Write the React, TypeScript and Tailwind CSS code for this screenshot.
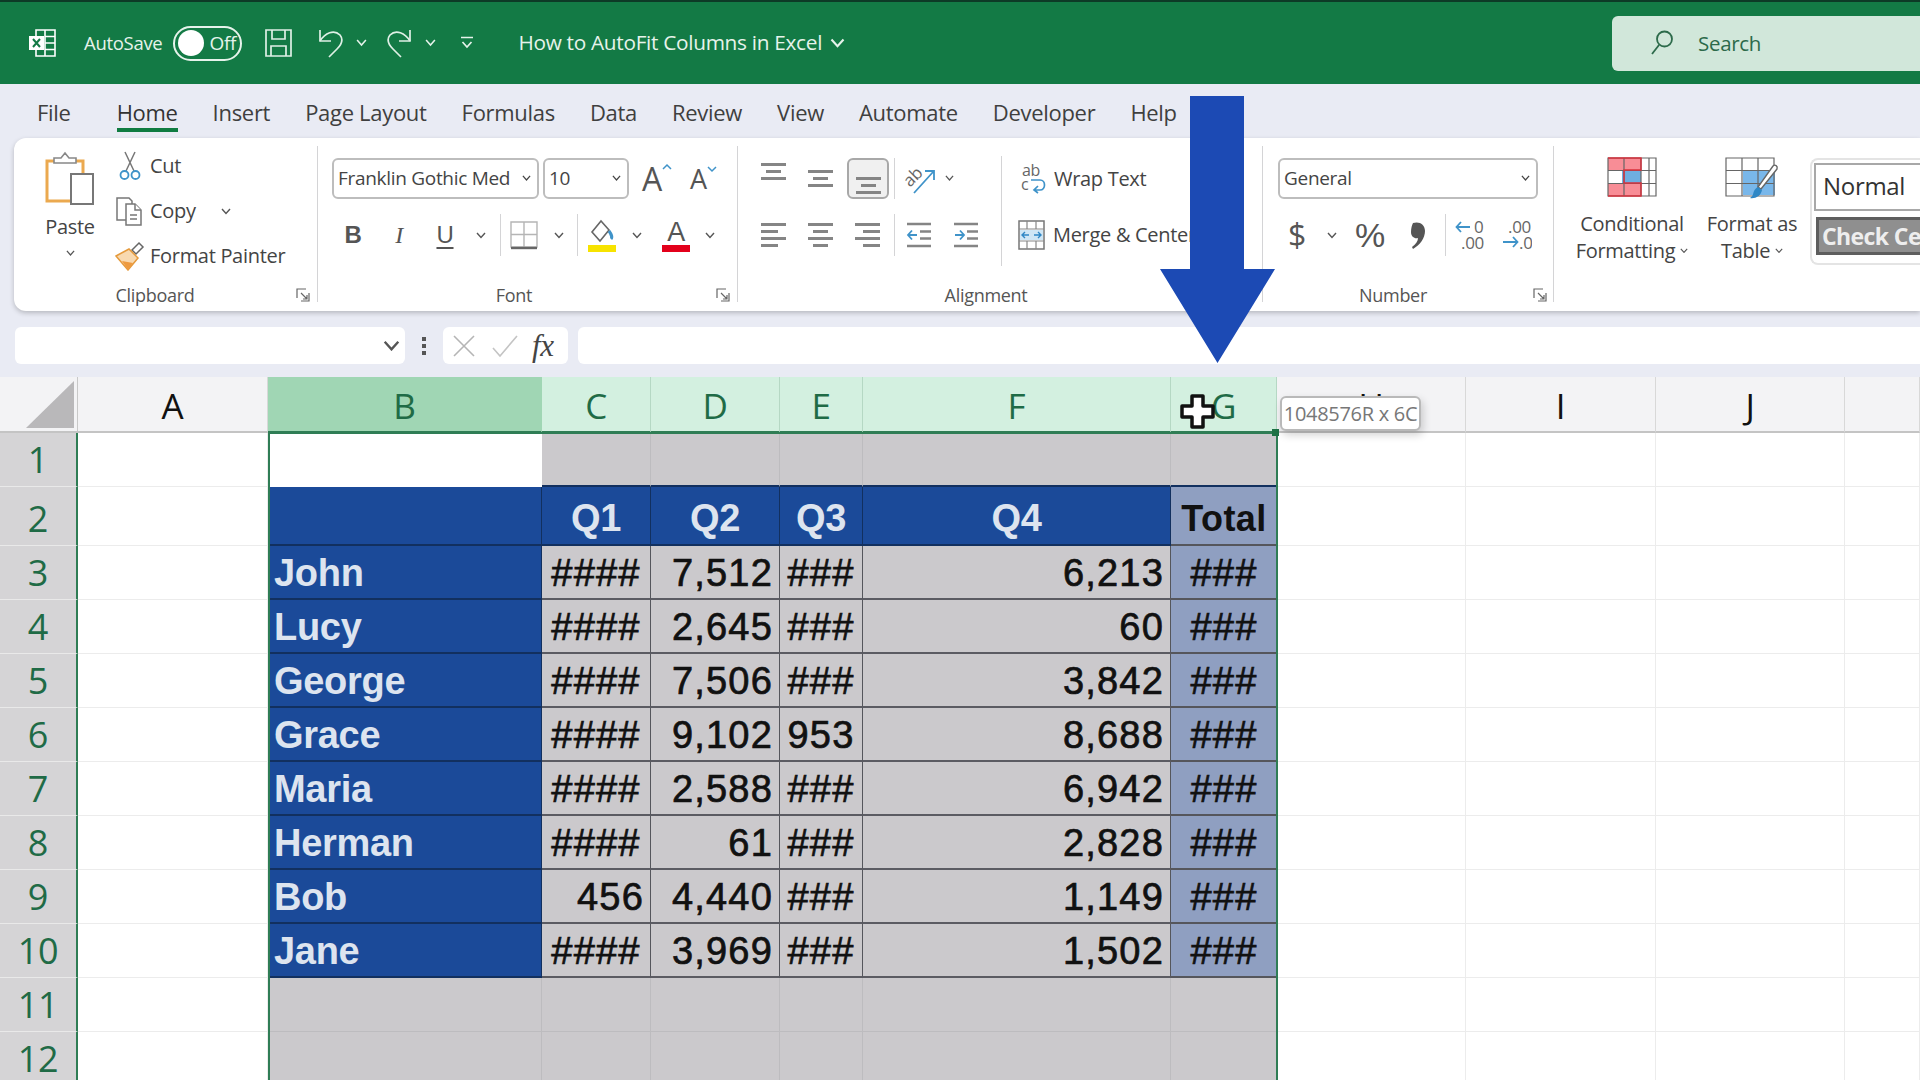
import React from "react";

const Chev = ({ w = 10, color = "#555" }: { w?: number; color?: string }) => (
  <svg width={w} height={w * 0.7} viewBox="0 0 10 7" fill="none" stroke={color} strokeWidth="1.4">
    <path d="M1 1l4 4.500L9 1" />
  </svg>
);

const Slot = ({ w, children, className = "" }: { w: number; children?: React.ReactNode; className?: string }) => (
  <div className={`flex items-center justify-center shrink-0 ${className}`} style={{ width: w }}>
    {children}
  </div>
);

const VSep = () => <div className="w-px h-[42px] bg-[#d4d4d6] shrink-0" />;
const GroupSep = () => <div className="w-px h-[156px] bg-[#d4d4d6] shrink-0" />;

const Launcher = () => (
  <svg width="14" height="14" viewBox="0 0 14 14" fill="none" stroke="#666" strokeWidth="1.2" className="shrink-0">
    <path d="M1 10V1h9M13 5v8H5M5 5l6 6M11 7v4H7" />
  </svg>
);

const Lines = ({ widths, align = "items-center" }: { widths: number[]; align?: string }) => (
  <div className={`flex flex-col gap-[4px] w-[25px] ${align}`}>
    {widths.map((w, i) => (
      <div key={i} className="h-[3px] bg-[#858585]" style={{ width: w }} />
    ))}
  </div>
);

const Combo = ({ w, label }: { w: number; label: string }) => (
  <div
    className="h-[41px] flex items-center justify-between pl-[4px] pr-[6px] bg-white border-2 border-[#bdbdbd] rounded-[6px] text-[19px] text-[#444] shrink-0"
    style={{ width: w }}
  >
    <span>{label}</span>
    <Chev w={9} color="#444" />
  </div>
);

const ExcelIcon = () => (
  <svg width="29" height="30" viewBox="0 0 29 30" fill="none" stroke="#fff" strokeWidth="1.6">
    <path d="M8 2h19v26H8z" />
    <path d="M17 2v26M17 8.500h10M17 15h10M17 21.500h10" />
    <rect x="1" y="8" width="15" height="14" fill="#fff" stroke="none" />
    <path d="M5 11l7 8M12 11l-7 8" stroke="#137a45" strokeWidth="2" />
  </svg>
);

const SaveIcon = () => (
  <svg width="29" height="30" viewBox="0 0 29 30" fill="none" stroke="#dff0e6" strokeWidth="1.7">
    <path d="M2 2h25v26H2z" />
    <path d="M8 2v9h13V2M7 28V18h15v10" />
  </svg>
);

const UndoIcon = ({ flip = false }: { flip?: boolean }) => (
  <svg width="27" height="31" viewBox="0 0 27 31" fill="none" stroke="#dff0e6" strokeWidth="1.7" className={flip ? "-scale-x-100" : ""}>
    <path d="M3 2v11h11" />
    <path d="M3 13C8 5 17 1 23 7c4 5 1 10-3 14l-8 8" />
  </svg>
);

const ScissorsIcon = () => (
  <svg width="24" height="30" viewBox="0 0 24 30" fill="none">
    <path d="M7 1l9 19M17 1L8 20" stroke="#777" strokeWidth="1.5" />
    <circle cx="6.500" cy="24" r="4" stroke="#3f93c9" strokeWidth="1.8" />
    <circle cx="17.500" cy="24" r="4" stroke="#3f93c9" strokeWidth="1.8" />
  </svg>
);

const CopyIcon = () => (
  <svg width="30" height="30" viewBox="0 0 30 30" fill="#fff" stroke="#777" strokeWidth="1.5">
    <path d="M2 2h12l3 3v19H2z" />
    <path d="M11 8h9l6 6v15H11z" />
    <path d="M20 8v6h6M15 19h7M15 23h7" />
  </svg>
);

const PainterIcon = () => (
  <svg width="30" height="30" viewBox="0 0 30 30">
    <path d="M17 9l7-7 4 4-7 7z" fill="#fff" stroke="#666" strokeWidth="1.5" />
    <path d="M1 15L14 8l9 9-10 12z" fill="#f8d9b0" stroke="#e59a3c" strokeWidth="1.5" />
    <path d="M7 20l11 2-5 7z" fill="#ee9a3f" />
  </svg>
);

const PasteIcon = () => (
  <svg width="50" height="54" viewBox="0 0 50 54">
    <path d="M2 10h36v40H2z" fill="#fff" stroke="#eba94f" strokeWidth="3" />
    <path d="M9 12V7h7l4-5 4 5h7v5z" fill="#fff" stroke="#888" strokeWidth="1.6" />
    <path d="M26 23h22v30H26z" fill="#fff" stroke="#777" strokeWidth="2" />
  </svg>
);

const BorderIcon = () => (
  <svg width="28" height="29" viewBox="0 0 28 29" fill="none" stroke="#b5b5b5" strokeWidth="1.4">
    <path d="M1 1h26v25H1zM14 1v25M1 13.500h26" />
    <path d="M1 27h26" stroke="#666" strokeWidth="2.400" />
  </svg>
);

const FillIcon = () => (
  <div className="flex flex-col items-center">
    <svg width="26" height="26" viewBox="0 0 26 26" fill="none" stroke="#666" strokeWidth="1.6">
      <path d="M12 2l-9 11 8 9 9-11z" />
      <path d="M20 12c3 4 3 7 2 8" stroke="#3f93c9" strokeWidth="3" />
    </svg>
    <div className="w-[28px] h-[7px] bg-[#f7e300]" />
  </div>
);

const OrientIcon = () => (
  <svg width="32" height="30" viewBox="0 0 32 30" fill="none">
    <text x="2" y="22" fontSize="17" fill="#666" transform="rotate(-45 6 18)" fontFamily="Open Sans, sans-serif">ab</text>
    <path d="M10 29L29 8M21 7h9v9" stroke="#3f93c9" strokeWidth="1.8" />
  </svg>
);

const IndentIcon = ({ right = false }: { right?: boolean }) => (
  <svg width="26" height="26" viewBox="0 0 26 26" fill="none">
    <path d="M1 2h24M14 9.500h11M14 16.500h11M1 24h24" stroke="#858585" strokeWidth="2.600" />
    {right ? (
      <path d="M2 13h9M7 8.500l4 4.500-4 4.500" stroke="#3f93c9" strokeWidth="1.800" />
    ) : (
      <path d="M11 13H2M6 8.500L2 13l4 4.500" stroke="#3f93c9" strokeWidth="1.800" />
    )}
  </svg>
);

const WrapIcon = () => (
  <svg width="26" height="31" viewBox="0 0 26 31" fill="none">
    <text x="1" y="13" fontSize="16" fill="#666" fontFamily="Open Sans, sans-serif">ab</text>
    <text x="0" y="27" fontSize="16" fill="#666" fontFamily="Open Sans, sans-serif">c</text>
    <path d="M10 17h9c6 0 6 10 0 10h-6M17 23l-4 4 4 3" stroke="#3f93c9" strokeWidth="1.7" />
  </svg>
);

const MergeIcon = () => (
  <svg width="27" height="30" viewBox="0 0 27 30" fill="none">
    <path d="M1 1h25v28H1z" stroke="#777" strokeWidth="1.5" />
    <path d="M1 9h25M1 21h25M9 1v8M18 1v8M9 21v8M18 21v8" stroke="#888" strokeWidth="1.2" />
    <rect x="2" y="10" width="23" height="10" fill="#cfe6f5" />
    <path d="M4 15h7M7 12l-3 3 3 3M23 15h-7M20 12l3 3-3 3" stroke="#2f87c5" strokeWidth="1.4" />
  </svg>
);

const DecimalIcon = ({ more }: { more: boolean }) => (
  <svg width="30" height="32" viewBox="0 0 30 32" fill="none">
    <text x={more ? 19 : 6} y="14" fontSize="17" fill="#666" fontFamily="Open Sans, sans-serif">{more ? "0" : ".00"}</text>
    <text x={more ? 6 : 17} y="30" fontSize="17" fill="#666" fontFamily="Open Sans, sans-serif">{more ? ".00" : ".0"}</text>
    {more ? (
      <path d="M15 8H2M6 3L1.500 8 6 13" stroke="#3f93c9" strokeWidth="1.800" />
    ) : (
      <path d="M1 23h14M11 18l4.500 5-4.500 5" stroke="#3f93c9" strokeWidth="1.800" />
    )}
  </svg>
);

const CondIcon = () => (
  <svg width="50" height="40" viewBox="0 0 50 40" fill="none">
    <rect x="1" y="1" width="33" height="12" fill="#f88d96" />
    <rect x="15" y="14" width="19" height="12" fill="#6eaee0" />
    <rect x="1" y="27" width="33" height="12" fill="#f88d96" />
    <path d="M1 1h48v38H1zM17 1v38M34 1v38M42 1v38M1 13.500h48M1 26.500h48" stroke="#666" strokeWidth="1.2" />
    <path d="M1 1h33v12H17v13h17v13H1" stroke="#d9303c" strokeWidth="1.4" />
  </svg>
);

const TableIcon = () => (
  <svg width="54" height="48" viewBox="0 0 54 48" fill="none">
    <rect x="18" y="14" width="32" height="24" fill="#79b7ea" />
    <path d="M1 1h48v38H1zM17 1v38M33 1v38M1 13.500h48M1 26.500h48" stroke="#666" strokeWidth="1.2" />
    <path d="M52 12L36 32l-3-2L48 9c2-2 5 0 4 3z" fill="#fff" stroke="#666" strokeWidth="1.4" />
    <path d="M33 30l4 3c-1 6-7 9-12 8 3-2 3-4 4-7 1-2 2-3 4-4z" fill="#2f87c5" />
  </svg>
);

const Ribbon = () => (
  <div className="ml-[14px] h-[173px] bg-white rounded-l-[12px] shadow-[0_2px_5px_rgba(0,0,0,0.22)] pt-[8px] flex items-start text-[#444] text-[20px]">
    {/* Clipboard */}
    <div className="w-[303px] shrink-0">
      <div className="h-[137px] flex pl-[26px]">
        <div className="w-[60px] flex flex-col items-center pt-[5px]">
          <PasteIcon />
          <div className="mt-[8px] leading-[28px]">Paste</div>
          <div className="mt-[9px]"><Chev w={9} /></div>
        </div>
        <div className="ml-[15px] pt-[2px] flex flex-col gap-[9px]">
          <div className="h-[36px] flex items-center"><Slot w={30}><ScissorsIcon /></Slot><span className="ml-[5px]">Cut</span></div>
          <div className="h-[36px] flex items-center"><Slot w={30}><CopyIcon /></Slot><span className="ml-[5px]">Copy</span><span className="ml-[25px]"><Chev w={10} /></span></div>
          <div className="h-[36px] flex items-center"><Slot w={30}><PainterIcon /></Slot><span className="ml-[5px]">Format Painter</span></div>
        </div>
      </div>
      <div className="h-[24px] flex items-center text-[18px] text-[#555]">
        <span className="w-[282px] text-center">Clipboard</span>
        <Launcher />
      </div>
    </div>
    <GroupSep />

    {/* Font */}
    <div className="w-[419px] shrink-0">
      <div className="h-[137px] pt-[12px]">
        <div className="h-[41px] flex items-center pl-[14px]">
          <Combo w={207} label="Franklin Gothic Med" />
          <div className="ml-[4px]"><Combo w={86} label="10" /></div>
          <div className="ml-[13px] flex items-start w-[34px] text-[32px] leading-none text-[#555]">
            <span>A</span><svg width="10" height="8" viewBox="0 0 10 8" fill="none" stroke="#3f93c9" strokeWidth="1.500"><path d="M1 6l4-4 4 4" /></svg>
          </div>
          <div className="ml-[14px] flex items-start w-[34px] text-[27px] leading-none text-[#555]">
            <span>A</span><svg width="10" height="8" viewBox="0 0 10 8" fill="none" stroke="#3f93c9" strokeWidth="1.500"><path d="M1 2l4 4 4-4" /></svg>
          </div>
        </div>
        <div className="mt-[15px] h-[42px] flex items-center pl-[12px] text-[24px] text-[#555]">
          <Slot w={46}><span className="font-bold font-['Liberation_Sans',sans-serif]">B</span></Slot>
          <Slot w={46}><span className="italic font-['Liberation_Serif',serif]">I</span></Slot>
          <Slot w={46}><span className="underline underline-offset-4 decoration-2 font-['Liberation_Sans',sans-serif]">U</span></Slot>
          <Slot w={26}><Chev w={10} /></Slot>
          <div className="ml-[6px]"><VSep /></div>
          <Slot w={45}><BorderIcon /></Slot>
          <Slot w={26}><Chev w={10} /></Slot>
          <div className="ml-[5px]"><VSep /></div>
          <Slot w={48}><FillIcon /></Slot>
          <Slot w={22}><Chev w={10} /></Slot>
          <Slot w={56}>
            <div className="flex flex-col items-center">
              <span className="text-[27px] leading-[26px] font-['Liberation_Sans',sans-serif]">A</span>
              <div className="w-[28px] h-[7px] bg-[#e3001b]" />
            </div>
          </Slot>
          <Slot w={12}><Chev w={10} /></Slot>
        </div>
      </div>
      <div className="h-[24px] flex items-center text-[18px] text-[#555]">
        <span className="w-[392px] text-center">Font</span>
        <span className="ml-[6px]"><Launcher /></span>
      </div>
    </div>
    <GroupSep />

    {/* Alignment */}
    <div className="w-[524px] shrink-0">
      <div className="h-[137px] flex">
        <div className="w-[263px] shrink-0 pt-[12px]">
          <div className="h-[41px] flex items-center pl-[12px]">
            <Slot w={46} className="pb-[15px]"><Lines widths={[25, 15, 25]} /></Slot>
            <Slot w={48}><Lines widths={[25, 15, 25]} /></Slot>
            <div className="ml-[3px] w-[42px] h-[41px] rounded-[6px] border-2 border-[#a8a8a8] bg-[#f0f0f0] flex items-end justify-center pb-[3px] shrink-0">
              <Lines widths={[25, 15, 25]} />
            </div>
            <div className="ml-[5px]"><div className="w-px h-[41px] bg-[#d4d4d6]" /></div>
            <Slot w={50}><OrientIcon /></Slot>
            <Chev w={9} />
          </div>
          <div className="mt-[15px] h-[42px] flex items-center pl-[12px]">
            <Slot w={46}><Lines widths={[25, 17, 25, 17]} align="items-start" /></Slot>
            <Slot w={48}><Lines widths={[25, 15, 25, 15]} /></Slot>
            <Slot w={46}><Lines widths={[25, 17, 25, 17]} align="items-end" /></Slot>
            <div className="ml-[4px]"><VSep /></div>
            <Slot w={48}><IndentIcon /></Slot>
            <Slot w={46}><IndentIcon right /></Slot>
          </div>
        </div>
        <div className="w-px h-[110px] mt-[10px] bg-[#d4d4d6] shrink-0" />
        <div className="flex-1 pt-[12px] whitespace-nowrap">
          <div className="h-[41px] flex items-center pl-[19px]">
            <WrapIcon /><span className="ml-[7px]">Wrap Text</span>
          </div>
          <div className="mt-[15px] h-[42px] flex items-center pl-[16px]">
            <MergeIcon /><span className="ml-[8px]">Merge &amp; Center</span>
          </div>
        </div>
      </div>
      <div className="h-[24px] flex items-center text-[18px] text-[#555]">
        <span className="w-[496px] text-center">Alignment</span>
      </div>
    </div>
    <GroupSep />

    {/* Number */}
    <div className="w-[290px] shrink-0">
      <div className="h-[137px] pt-[12px]">
        <div className="h-[41px] pl-[15px]"><Combo w={260} label="General" /></div>
        <div className="mt-[15px] h-[42px] flex items-center pl-[12px] text-[#555]">
          <Slot w={44}><span className="text-[32px] leading-none">$</span></Slot>
          <Slot w={26}><Chev w={10} /></Slot>
          <Slot w={50}><span className="text-[34px] leading-none font-['Liberation_Sans',sans-serif]">%</span></Slot>
          <Slot w={46}>
            <svg width="16" height="27" viewBox="0 0 16 27" fill="#555"><path d="M3 1c6-2 12 1 12 8 0 7-5 14-12 18l-1-2c4-3 6-6 6-9-3 1-7-1-7-6 0-4 1-7 2-9z" /></svg>
          </Slot>
          <div className="ml-[4px]"><VSep /></div>
          <Slot w={48}><DecimalIcon more /></Slot>
          <Slot w={46}><DecimalIcon more={false} /></Slot>
        </div>
      </div>
      <div className="h-[24px] flex items-center text-[18px] text-[#555]">
        <span className="w-[260px] text-center">Number</span>
        <span className="ml-[10px]"><Launcher /></span>
      </div>
    </div>
    <GroupSep />

    {/* Styles */}
    <div className="flex-1 flex overflow-hidden min-w-0">
      <div className="w-[156px] shrink-0 flex flex-col items-center pt-[7px] leading-[27px]">
        <div className="h-[57px] pt-[4px]"><CondIcon /></div>
        <div>Conditional</div>
        <div className="flex items-center gap-[5px]">Formatting <Chev w={8} /></div>
      </div>
      <div className="w-[84px] shrink-0 flex flex-col items-center pt-[7px] leading-[27px] whitespace-nowrap">
        <div className="h-[57px] pt-[4px]"><TableIcon /></div>
        <div>Format as</div>
        <div className="flex items-center gap-[5px]">Table <Chev w={8} /></div>
      </div>
      <div className="ml-[16px] mt-[12px] h-[107px] flex-1 border-2 border-r-0 border-[#e4e4e4] rounded-l-[8px] pl-[2px] pt-[3px] overflow-hidden whitespace-nowrap">
        <div className="h-[48px] border-2 border-r-0 border-[#a8a8a8] flex items-center pl-[7px] pb-[2px] text-[24px] text-[#333]">Normal</div>
        <div className="mt-[6px] ml-[2px] h-[38px] border-[3px] border-r-0 border-[#5e5e5e] bg-[#8f8f8f] flex items-center pl-[3px] text-[23px] tracking-[-0.6px] font-bold text-[#eee]">Check Cell</div>
      </div>
    </div>
  </div>
);

const columns = ["A", "B", "C", "D", "E", "F", "G", "H", "I", "J", ""];

const people: [string, string, string, string, string][] = [
  ["John", "####", "7,512", "###", "6,213"],
  ["Lucy", "####", "2,645", "###", "60"],
  ["George", "####", "7,506", "###", "3,842"],
  ["Grace", "####", "9,102", "953", "8,688"],
  ["Maria", "####", "2,588", "###", "6,942"],
  ["Herman", "####", "61", "###", "2,828"],
  ["Bob", "456", "4,440", "###", "1,149"],
  ["Jane", "####", "3,969", "###", "1,502"],
];

const RowNum = ({ n }: { n: number }) => (
  <div
    className={`bg-[#d5d4d6] border-r-2 border-r-[#2f7d55] border-b border-b-[#e9e9e9] flex items-center justify-center text-[36px] text-[#1f6b46] ${
      n === 2 ? "pt-[6px]" : "pt-[1px]"
    }`}
  >
    {n}
  </div>
);

const Empty = () => <div className="bg-white border-r border-b border-[#ececec]" />;

const Blank = () => (
  <>
    <Empty />
    <Empty />
    <Empty />
    <Empty />
  </>
);

const dataCell =
  "bg-[#cbc9cc] border-r border-[#55565c] border-b-2 border-b-[#5b5b62] pt-[2px] flex items-center text-[38px] text-[#111] tracking-[1.2px] [-webkit-text-stroke:0.7px_#111] font-['Liberation_Sans',sans-serif]";
const blueCell =
  "bg-[#1b4a99] border-r border-b-2 border-[#12305f] flex items-center text-[38px] font-bold text-[#dde4ef] font-['Liberation_Sans',sans-serif]";
const totalCell =
  "bg-[#8f9fc1] border-b-2 border-[#55565c] pt-[2px] flex items-center justify-center text-[#111] font-['Liberation_Sans',sans-serif]";
const totalHash = "text-[38px] tracking-[1.2px] [-webkit-text-stroke:0.7px_#111]";
const grayCell = "bg-[#cbc9cc] border-r border-b border-[#bdbcbf]";
const topGray = "bg-[#cbc9cc] border-r border-[#bdbcbf] border-b-2 border-b-[#12305f]";

const Sheet = () => (
  <div className="relative flex-1 overflow-hidden">
    <div className="grid grid-cols-[78px_190px_274px_109px_129px_83px_308px_106px_189px_190px_189px_1fr] grid-rows-[56px_54px_59px_repeat(10,54px)]">
      {/* header row */}
      <div className="bg-[#f3f3f5] border-r border-[#c8c8c8] border-b-2 border-b-[#c4c4c4] flex items-end justify-end pr-[3px] pb-[3px]">
        <svg width="48" height="47" viewBox="0 0 48 47"><path d="M48 0v47H0z" fill="#b9b8ba" /></svg>
      </div>
      {columns.map((c, i) => {
        const strong = c === "B";
        const on = i >= 2 && i <= 6;
        return (
          <div
            key={i}
            className={`flex items-center justify-center pt-[4px] text-[35px] border-r ${
              strong
                ? "bg-[#a0d6b4] text-[#1f6b46] border-r-[#a0d6b4] border-b-2 border-b-[#2f7d55]"
                : on
                ? "bg-[#d3f0e0] text-[#1f6b46] border-r-[#b5d8c4] border-b-2 border-b-[#2f7d55]"
                : "bg-[#f3f3f5] text-[#111] border-r-[#d8d8d8] border-b-2 border-b-[#c4c4c4]"
            }`}
          >
            {c}
          </div>
        );
      })}

      {/* row 1 */}
      <RowNum n={1} />
      <Empty />
      <div className="bg-white" />
      <div className={topGray} />
      <div className={topGray} />
      <div className={topGray} />
      <div className={topGray} />
      <div className={topGray} />
      <Blank />

      {/* row 2 */}
      <RowNum n={2} />
      <Empty />
      <div className={blueCell} />
      {["Q1", "Q2", "Q3", "Q4"].map((q) => (
        <div key={q} className={`${blueCell} justify-center pt-[6px]`}>{q}</div>
      ))}
      <div className={`${totalCell} text-[36px] font-bold tracking-[0.4px] pt-[6px]`}>Total</div>
      <Blank />

      {people.map((p, i) => (
        <React.Fragment key={p[0]}>
          <RowNum n={i + 3} />
          <Empty />
          <div className={`${blueCell} pl-[6px] pt-[2px]`}>{p[0]}</div>
          <div className={`${dataCell} ${p[1].startsWith("#") ? "justify-center" : "justify-end pr-[6px]"}`}>{p[1]}</div>
          <div className={`${dataCell} justify-end pr-[6px]`}>{p[2]}</div>
          <div className={`${dataCell} justify-center`}>{p[3]}</div>
          <div className={`${dataCell} justify-end pr-[6px]`}>{p[4]}</div>
          <div className={`${totalCell} ${totalHash}`}>###</div>
          <Blank />
        </React.Fragment>
      ))}

      {/* rows 11, 12 */}
      {[11, 12].map((n) => (
        <React.Fragment key={n}>
          <RowNum n={n} />
          <Empty />
          <div className={grayCell} />
          <div className={grayCell} />
          <div className={grayCell} />
          <div className={grayCell} />
          <div className={grayCell} />
          <div className={grayCell} />
          <Blank />
        </React.Fragment>
      ))}
    </div>

    {/* selection outline */}
    <div className="absolute left-[268px] top-[55px] w-[1010px] h-[700px] border-2 border-[#2f7d55] border-b-0 pointer-events-none" />
    <div className="absolute left-[1272px] top-[52px] w-[7px] h-[7px] bg-[#1f7246]" />

    {/* size tooltip */}
    <div className="absolute left-[1280px] top-[19px] w-[141px] h-[35px] bg-white border-2 border-[#b9b9b9] rounded-[6px] shadow-[2px_4px_8px_rgba(0,0,0,0.18)] flex items-center justify-center text-[20px] text-[#777] whitespace-nowrap">
      1048576R x 6C
    </div>

    {/* plus cursor */}
    <svg className="absolute left-[1180px] top-[17px]" width="35" height="35" viewBox="0 0 35 35">
      <path d="M12 2h11v10h10v11H23v10H12V23H2V12h10z" fill="#fff" stroke="#111" strokeWidth="3.500" strokeLinejoin="round" />
    </svg>
  </div>
);

export default function App() {
  return (
    <div className="relative w-[1920px] h-[1080px] overflow-hidden flex flex-col bg-[#e9ebf4] font-['Open_Sans',sans-serif] tracking-[-0.3px]">
      {/* title bar */}
      <div className="h-[84px] shrink-0 bg-[#137a45] border-t-2 border-[#0d3a26] flex items-center text-[#e6f3eb] text-[20.800px]">
        <div className="ml-[28px]"><ExcelIcon /></div>
        <span className="ml-[27px] text-[18.500px] font-medium">AutoSave</span>
        <div className="ml-[11px] w-[69px] h-[35px] rounded-full border-2 border-[#e6f3eb] flex items-center pl-[3px] gap-[5px]">
          <div className="w-[26px] h-[26px] rounded-full bg-white" />
          <span className="text-[19px]">Off</span>
        </div>
        <div className="ml-[22px]"><SaveIcon /></div>
        <div className="ml-[24px]"><UndoIcon /></div>
        <div className="ml-[12px]"><Chev w={11} color="#e6f3eb" /></div>
        <div className="ml-[19px]"><UndoIcon flip /></div>
        <div className="ml-[12px]"><Chev w={11} color="#e6f3eb" /></div>
        <svg className="ml-[24px]" width="14" height="15" viewBox="0 0 14 15" fill="none" stroke="#e6f3eb" strokeWidth="1.700">
          <path d="M1 1.500h12M2.500 6L7 11l4.500-5" />
        </svg>
        <span className="ml-[44px]">How to AutoFit Columns in Excel</span>
        <div className="ml-[8px]"><Chev w={15} color="#e6f3eb" /></div>
        <div className="ml-auto w-[308px] h-[55px] bg-[#d1e7da] rounded-l-[6px] flex items-center pl-[38px] text-[#2c6a4a]">
          <svg width="24" height="26" viewBox="0 0 24 26" fill="none" stroke="#2c6a4a" strokeWidth="1.800">
            <circle cx="14.500" cy="9" r="7.500" />
            <path d="M9 15L2 24" />
          </svg>
          <span className="ml-[24px] text-[20.500px]">Search</span>
        </div>
      </div>

      {/* tabs */}
      <div className="h-[54px] shrink-0 pl-[37px] flex items-start gap-[35px] text-[#3f3f3f] text-[22px]">
        {["File", "Home", "Insert", "Page Layout", "Formulas", "Data", "Review", "View", "Automate", "Developer", "Help"].map((t) => (
          <div
            key={t}
            className={`pt-[13px] leading-[30px] ${t === "File" ? "mr-[11px]" : ""} ${t === "Home" ? "border-b-4 border-[#107c41] font-medium text-[#333] pb-[1px]" : ""}`}
          >
            {t}
          </div>
        ))}
      </div>

      <Ribbon />

      {/* formula bar */}
      <div className="h-[66px] shrink-0 flex items-start pt-[16px] pl-[15px]">
        <div className="w-[390px] h-[37px] bg-white rounded-[6px] flex items-center justify-end pr-[5px]">
          <Chev w={17} color="#555" />
        </div>
        <div className="w-[38px] h-[37px] flex flex-col items-center justify-center gap-[3px]">
          <div className="w-[4px] h-[4px] bg-[#555]" />
          <div className="w-[4px] h-[4px] bg-[#555]" />
          <div className="w-[4px] h-[4px] bg-[#555]" />
        </div>
        <div className="w-[125px] h-[37px] bg-white rounded-[6px] flex items-center pl-[9px] shrink-0">
          <svg width="24" height="24" viewBox="0 0 24 24" fill="none" stroke="#b5b5b5" strokeWidth="1.600"><path d="M2 2l20 20M22 2L2 22" /></svg>
          <svg className="ml-[16px]" width="26" height="24" viewBox="0 0 26 24" fill="none" stroke="#c4c4c4" strokeWidth="1.600"><path d="M1 14l7 8L25 2" /></svg>
          <span className="ml-[14px] text-[31px] leading-none italic font-['Liberation_Serif',serif] text-[#444]">fx</span>
        </div>
        <div className="ml-[10px] flex-1 h-[37px] bg-white rounded-l-[6px]" />
      </div>

      <Sheet />

      {/* big blue arrow */}
      <svg className="absolute left-[1160px] top-[96px]" width="115" height="267" viewBox="0 0 115 267">
        <path d="M30 0h54v173h31L57.500 267 0 173h30z" fill="#1c4ab4" />
      </svg>
    </div>
  );
}
